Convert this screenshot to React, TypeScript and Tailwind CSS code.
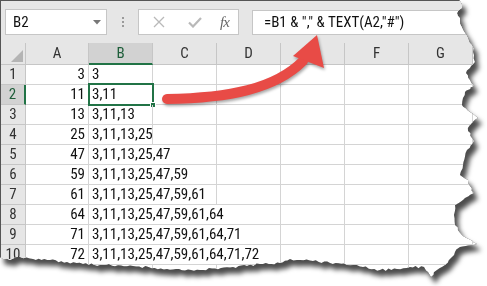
import { useMemo } from 'react';

const FONT = { fontFamily: '"Liberation Sans Narrow", "Roboto Condensed", Roboto, sans-serif' };

const COLS = ['A', 'B', 'C', 'D', 'E', 'F', 'G'];

// b column text spills over the empty cells to its right
const ROWS = [
  { n: 1, a: '3', b: '3', span: 'col-span-1', rest: 5 },
  { n: 2, a: '11', b: '3,11', span: 'col-span-1', rest: 5 },
  { n: 3, a: '13', b: '3,11,13', span: 'col-span-1', rest: 5 },
  { n: 4, a: '25', b: '3,11,13,25', span: 'col-span-1', rest: 5 },
  { n: 5, a: '47', b: '3,11,13,25,47', span: 'col-span-2', rest: 4 },
  { n: 6, a: '59', b: '3,11,13,25,47,59', span: 'col-span-2', rest: 4 },
  { n: 7, a: '61', b: '3,11,13,25,47,59,61', span: 'col-span-2', rest: 4 },
  { n: 8, a: '64', b: '3,11,13,25,47,59,61,64', span: 'col-span-3', rest: 3 },
  { n: 9, a: '71', b: '3,11,13,25,47,59,61,64,71', span: 'col-span-3', rest: 3 },
  { n: 10, a: '72', b: '3,11,13,25,47,59,61,64,71,72', span: 'col-span-3', rest: 3 },
  { n: 11, a: '', b: '', span: 'col-span-1', rest: 5 },
];

// rough outline of the torn right and bottom edges
const RIGHT = [
  [459, 0], [462, 8], [457, 13], [460, 21], [463, 30], [468, 38], [472, 45], [474, 55], [475, 62],
  [470, 68], [466, 73], [470, 80], [474, 86], [465, 92], [463, 98], [462, 105], [470, 112], [478, 118],
  [470, 125], [468, 131], [472, 138], [474, 141], [467, 150], [463, 165], [460, 175], [468, 180],
  [470, 186], [474, 193], [465, 198], [455, 205], [454, 215], [455, 225], [462, 235], [477, 244],
  [460, 247], [455, 252], [451, 258], [445, 265], [437, 270], [431, 277],
];
const BOTTOM = [
  [428, 272], [424, 267], [410, 267], [397, 269], [380, 270], [363, 267], [347, 265], [330, 263],
  [313, 261], [297, 260], [290, 259], [280, 263], [263, 264], [247, 266], [233, 267], [200, 270],
  [167, 269], [133, 266], [100, 265], [83, 264], [67, 262], [50, 260], [33, 259], [20, 257],
  [10, 260], [0, 257],
];

function tornPolygon() {
  let s = 17;
  const rand = () => {
    s = (s * 9301 + 49297) % 233280;
    return s / 233280 - 0.5;
  };
  const pts: string[] = ['0px 0px'];
  const walk = (list: number[][], axis: 'x' | 'y') => {
    for (let i = 0; i < list.length - 1; i++) {
      const [x1, y1] = list[i];
      const [x2, y2] = list[i + 1];
      const steps = Math.max(1, Math.round(Math.hypot(x2 - x1, y2 - y1) / 3));
      for (let k = 0; k < steps; k++) {
        const t = k / steps;
        let x = x1 + (x2 - x1) * t;
        let y = y1 + (y2 - y1) * t;
        if (k > 0) {
          if (axis === 'x') x += rand() * 2.5;
          else y += rand() * 2.5;
        }
        pts.push(`${x.toFixed(1)}px ${y.toFixed(1)}px`);
      }
    }
    const last = list[list.length - 1];
    pts.push(`${last[0]}px ${last[1]}px`);
  };
  walk(RIGHT, 'x');
  walk(BOTTOM, 'y');
  return `polygon(${pts.join(',')})`;
}

function CurvedArrow() {
  return (
    <svg
      className="absolute left-0 top-0 pointer-events-none [filter:drop-shadow(1px_2px_1.5px_rgba(0,0,0,0.35))]"
      width="487"
      height="286"
      viewBox="0 0 487 286"
    >
      <path d="M166 98 C228 97 274 88 302 60" fill="none" stroke="#e84b46" strokeWidth="10" strokeLinecap="round" />
      <polygon points="316,34 323,67 292,55" fill="#e84b46" />
    </svg>
  );
}

function Toolbar() {
  return (
    <div className="h-[42px] bg-[#e6e6e6] flex items-start pt-[8px] pl-[4px]">
      <div className="w-[102px] h-[26px] bg-white border border-[#c6c6c6] flex items-center justify-between pl-[7px] pr-[5px]">
        <span className="text-[15px] text-[#111]" style={FONT}>B2</span>
        <svg width="8" height="5" viewBox="0 0 8 5">
          <polygon points="0,0 8,0 4,4.5" fill="#777" />
        </svg>
      </div>
      <div className="w-[31px] h-[26px] flex flex-col items-center justify-center gap-[2px]">
        <span className="w-[2px] h-[2px] bg-[#9a9a9a]" />
        <span className="w-[2px] h-[2px] bg-[#9a9a9a]" />
        <span className="w-[2px] h-[2px] bg-[#9a9a9a]" />
      </div>
      <div className="w-[101px] h-[26px] bg-white border border-[#c6c6c6] flex items-center">
        <div className="w-[38px] flex justify-center pl-[2px]">
          <svg width="12" height="12" viewBox="0 0 12 12">
            <path d="M1 1 L11 11 M11 1 L1 11" stroke="#b9b9b9" strokeWidth="1.3" />
          </svg>
        </div>
        <div className="w-[36px] flex justify-center">
          <svg width="14" height="11" viewBox="0 0 14 11">
            <path d="M1 5.5 L5 9.5 L13 1" stroke="#b9b9b9" strokeWidth="2.2" fill="none" />
          </svg>
        </div>
        <div className="flex-1 flex justify-center pr-[2px]">
          <span className="text-[15px] italic text-[#666] tracking-[-1px]" style={{ fontFamily: '"Liberation Serif", serif' }}>
            fx
          </span>
        </div>
      </div>
      <div className="ml-[13px] mt-[1px] flex-1 h-[25px] bg-white border border-[#c6c6c6] flex items-center pl-[11px]">
        <span className="text-[15px] text-[#111] whitespace-nowrap" style={FONT}>
          =B1 &amp; &quot;,&quot; &amp; TEXT(A2,&quot;#&quot;)
        </span>
      </div>
    </div>
  );
}

function Sheet() {
  return (
    <div className="grid grid-cols-[25px_63px_64px_64px_64px_64px_64px_64px] text-[15px] text-[#111]" style={FONT}>
      <div className="h-[22px] bg-[#e6e6e6] border-r border-b border-[#c6c6c6] flex items-end justify-end pr-[2px] pb-[2px]">
        <svg width="12" height="12" viewBox="0 0 12 12">
          <polygon points="12,0 12,12 0,12" fill="#b4b4b4" />
        </svg>
      </div>
      {COLS.map((c) =>
        c === 'B' ? (
          <div key={c} className="h-[22px] bg-[#d2d2d2] border-r border-[#c6c6c6] border-b-2 border-b-[#217346] flex items-center justify-center text-[#1e5e3a]">
            {c}
          </div>
        ) : (
          <div key={c} className="h-[22px] bg-[#e6e6e6] border-r border-b border-[#c6c6c6] flex items-center justify-center text-[#333]">
            {c}
          </div>
        )
      )}
      {ROWS.map((r) => (
        <div key={r.n} className="contents">
          {r.n === 2 ? (
            <div className="h-[20px] bg-[#d2d2d2] border-b border-[#c6c6c6] border-r-2 border-r-[#217346] flex items-center justify-center text-[#1e5e3a]">
              {r.n}
            </div>
          ) : (
            <div className="h-[20px] bg-[#e6e6e6] border-r border-b border-[#c6c6c6] flex items-center justify-center text-[#333]">
              {r.n}
            </div>
          )}
          <div className="h-[20px] border-r border-b border-[#d4d4d4] flex items-center justify-end pr-[3px]">{r.a}</div>
          <div className={`${r.span} relative h-[20px] border-r border-b border-[#d4d4d4] flex items-center pl-[3px] whitespace-nowrap`}>
            {r.b}
            {r.n === 2 && (
              <>
                <div className="absolute -left-[1px] -top-[2px] w-[66px] h-[23px] border-2 border-[#217346]" />
                <div className="absolute -right-[4px] -bottom-[4px] w-[6px] h-[6px] bg-[#217346] border border-white" />
              </>
            )}
          </div>
          {Array.from({ length: r.rest }).map((_, i) => (
            <div key={i} className="h-[20px] border-r border-b border-[#d4d4d4]" />
          ))}
        </div>
      ))}
    </div>
  );
}

export default function App() {
  const clip = useMemo(() => tornPolygon(), []);
  return (
    <div className="w-[487px] h-[286px] bg-white overflow-hidden">
      <div className="[filter:drop-shadow(0_0_0.6px_#222)_drop-shadow(4px_6px_2.5px_rgba(0,0,0,0.7))]">
        <div className="relative w-[487px] h-[286px] bg-white border-t border-l border-[#555] overflow-hidden" style={{ clipPath: clip }}>
          <Toolbar />
          <Sheet />
          <CurvedArrow />
        </div>
      </div>
    </div>
  );
}
